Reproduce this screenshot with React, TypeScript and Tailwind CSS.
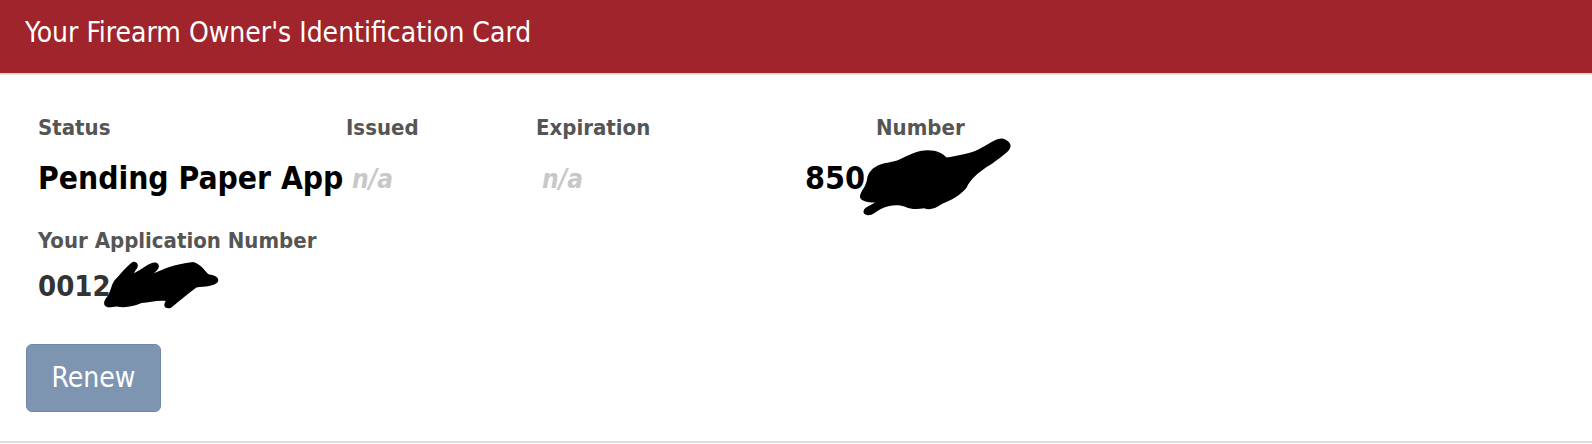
const font = "font-['DejaVu_Sans_Condensed','DejaVu_Sans',sans-serif]";

// redaction marks from the screenshot
function Scribble1() {
  return (
    <svg className="absolute left-[50px] top-[-26px]" width="162" height="85" viewBox="1050 100 480 250">
      <path
        d="M1085 342 C1072 338 1072 326 1085 318 L1110 305 C1085 305 1062 300 1065 285 C1068 270 1080 262 1085 240 C1088 210 1110 195 1140 188 C1160 184 1170 182 1180 178 C1210 165 1235 150 1265 150 C1295 150 1310 160 1322 172 C1360 165 1400 160 1430 140 C1455 125 1480 108 1495 118 C1515 128 1516 142 1500 156 C1480 172 1465 185 1440 200 C1415 218 1395 232 1380 262 C1360 285 1335 298 1310 308 C1290 322 1270 330 1255 322 C1235 325 1215 325 1200 318 C1180 310 1150 312 1125 325 C1110 334 1098 346 1085 342 Z"
        fill="#000"
      />
    </svg>
  );
}

function Scribble2() {
  return (
    <svg className="absolute left-[62px] top-[-11px]" width="123" height="52" viewBox="300 150 370 155">
      <path
        d="M318 292 C308 285 312 272 325 258 C332 245 335 225 345 212 C362 195 380 170 398 158 C412 155 420 170 408 182 L402 192 C425 182 448 158 468 160 C482 165 480 180 462 192 C490 180 520 165 580 158 C605 165 615 185 628 196 C645 198 660 205 655 218 C645 232 615 232 590 235 C570 250 545 270 515 295 C500 302 486 294 498 276 C475 272 450 280 425 282 C400 292 375 298 350 292 C338 292 328 298 318 292 Z"
        fill="#000"
      />
    </svg>
  );
}

export default function App() {
  return (
    <div className={`${font} h-[444px] w-full bg-white`}>
      <div className="h-[75px] border-b-2 border-[#dddddd] bg-[#a0242b] pl-[25px] pt-[17px] text-[28px] leading-[32px] text-white">
        Your Firearm Owner's Identification Card
      </div>
      <div className="h-[368px] border-b-2 border-[#dddddd]">
        <div className="grid grid-cols-[308px_190px_269px_1fr] pl-[38px] pt-[40px]">
          <div>
            <div className="text-[22px] font-bold leading-[26px] text-[#555555]">Status</div>
            <div className="mt-[18px] text-[31.5px] font-bold leading-[38px] text-black">Pending Paper App</div>
          </div>
          <div>
            <div className="text-[22px] font-bold leading-[26px] text-[#555555]">Issued</div>
            <div className="mt-[19px] pl-[6px] text-[26px] font-bold italic leading-[38px] text-[#c8c8c8]">n/a</div>
          </div>
          <div>
            <div className="text-[22px] font-bold leading-[26px] text-[#555555]">Expiration</div>
            <div className="mt-[19px] pl-[6px] text-[26px] font-bold italic leading-[38px] text-[#c8c8c8]">n/a</div>
          </div>
          <div>
            <div className="pl-[71px] text-[22px] font-bold leading-[26px] text-[#555555]">Number</div>
            <div className="relative mt-[18px] text-[32px] font-bold leading-[38px] text-black">
              850
              <Scribble1 />
            </div>
          </div>
        </div>
        <div className="pl-[38px] pt-[30px]">
          <div className="text-[22px] font-bold leading-[26px] text-[#555555]">Your Application Number</div>
          <div className="relative mt-[16px] text-[29px] font-bold leading-[32px] text-[#333333]">
            0012
            <Scribble2 />
          </div>
        </div>
        <div className="pl-[26px] pt-[42px]">
          <button className="h-[68px] w-[135px] rounded-[6px] border border-[#7088a8] bg-[#7d95b0] text-[28px] text-white">
            Renew
          </button>
        </div>
      </div>
    </div>
  );
}
